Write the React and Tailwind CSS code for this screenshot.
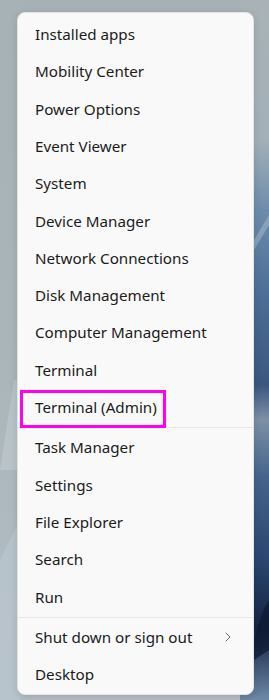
import React from "react";

const groups = [
  [
    "Installed apps",
    "Mobility Center",
    "Power Options",
    "Event Viewer",
    "System",
    "Device Manager",
    "Network Connections",
    "Disk Management",
    "Computer Management",
    "Terminal",
    "Terminal (Admin)",
  ],
  ["Task Manager", "Settings", "File Explorer", "Search", "Run"],
  ["Shut down or sign out", "Desktop"],
];

function Wallpaper() {
  return (
    <svg
      className="absolute inset-0"
      width="269"
      height="700"
      viewBox="0 0 269 700"
      preserveAspectRatio="none"
    >
      <defs>
        <linearGradient id="bgL" x1="0" y1="0" x2="0" y2="1">
          <stop offset="0" stopColor="#a7b2b6" />
          <stop offset="0.5" stopColor="#aab5ba" />
          <stop offset="1" stopColor="#b3bfc6" />
        </linearGradient>
        <linearGradient id="bgR" x1="0" y1="0" x2="0" y2="1">
          <stop offset="0" stopColor="#a9b3b7" />
          <stop offset="0.2" stopColor="#a3b0b8" />
          <stop offset="0.3" stopColor="#6d8cac" />
          <stop offset="0.42" stopColor="#4d6e96" />
          <stop offset="0.55" stopColor="#3b5780" />
          <stop offset="0.6" stopColor="#7d90a6" />
          <stop offset="0.68" stopColor="#46648c" />
          <stop offset="0.8" stopColor="#2b4670" />
          <stop offset="0.9" stopColor="#142440" />
          <stop offset="1" stopColor="#6e88a8" />
        </linearGradient>
      </defs>
      <rect x="0" y="0" width="269" height="700" fill="url(#bgL)" />
      <path d="M0 470 L14 380 L20 380 L20 470 Z" fill="#bcc6ca" opacity="0.8" />
      <path d="M0 560 L20 520 L20 700 L0 700 Z" fill="#bac6cf" opacity="0.7" />
      <rect x="240" y="0" width="29" height="700" fill="url(#bgR)" />
      <path d="M254 240 L269 215 L269 225 L254 250 Z" fill="#9fb4c8" opacity="0.6" />
      <path d="M254 640 Q262 610 269 600 L269 650 L254 660 Z" fill="#0c1830" opacity="0.7" />
    </svg>
  );
}

export default function App() {
  return (
    <div
      className="relative h-[700px] w-[269px] overflow-hidden"
      style={{ fontFamily: '"Noto Sans", "Open Sans", sans-serif' }}
    >
      <Wallpaper />
      <div className="relative ml-[17px] mt-[12px] w-[237px] rounded-[8px] border border-[#e3e3e3] bg-[#f9f9f9] pt-[3px] pb-[1px] shadow-[0_2px_8px_rgba(0,0,0,0.12)]">
        {groups.map((items, gi) => (
          <div key={gi}>
            {gi > 0 && <div className="my-[1px] h-px bg-[#e6e6e6]" />}
            {items.map((label) => {
              const admin = label === "Terminal (Admin)";
              const shut = label === "Shut down or sign out";
              return (
                <div
                  key={label}
                  className="relative flex h-[37.3px] items-center justify-between pl-[17px] pr-[22px] text-[15.2px] text-[#1b1b1b]"
                >
                  <span className="leading-none">{label}</span>
                  {shut && (
                    <svg width="6" height="10" viewBox="0 0 6 10" fill="none">
                      <path
                        d="M1 1 L5 5 L1 9"
                        stroke="#6b6b6b"
                        strokeWidth="1"
                        strokeLinecap="round"
                        strokeLinejoin="round"
                      />
                    </svg>
                  )}
                  {admin && (
                    <div className="absolute left-[2px] top-[1px] h-[38px] w-[146px] border-[3px] border-[#ff00f0]" />
                  )}
                </div>
              );
            })}
          </div>
        ))}
      </div>
    </div>
  );
}
